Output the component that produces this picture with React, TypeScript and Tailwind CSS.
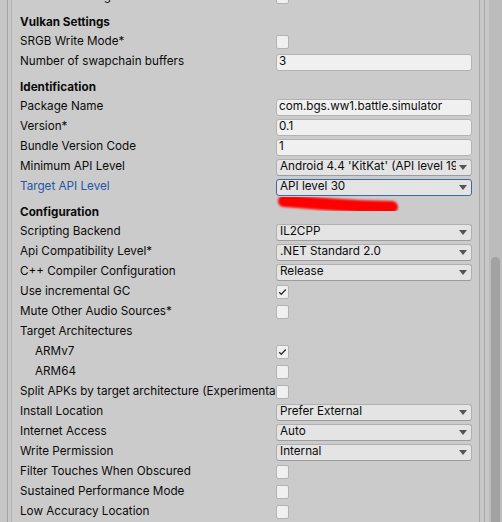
import React from "react";

type RowProps = {
  label: string;
  indent?: boolean;
  blue?: boolean;
  children?: React.ReactNode;
};

function Row({ label, indent, blue, children }: RowProps) {
  return (
    <div className="flex h-5 items-center">
      <div
        className={`w-[264px] shrink-0 overflow-hidden whitespace-nowrap pr-[3px] ${indent ? "pl-[23px]" : "pl-2"} ${blue ? "text-[#2656a6]" : "text-[#0b0b0b]"}`}
      >
        {label}
      </div>
      <div className="flex w-[196px] shrink-0 items-center">{children}</div>
    </div>
  );
}

function Header({ title }: { title: string }) {
  return (
    <div className="mt-[7px] flex h-[18px] items-center pl-2 font-bold text-[#0b0b0b]">{title}</div>
  );
}

function TextField({ value }: { value: string }) {
  return (
    <div className="flex h-[17px] w-full items-center overflow-hidden whitespace-nowrap rounded-[3px] border border-[#b3b3b3] bg-[#f0f0f0] pl-[2px] text-[#0b0b0b]">
      {value}
    </div>
  );
}

function Dropdown({ value, focused }: { value: string; focused?: boolean }) {
  return (
    <div
      className={`flex h-[17px] w-full items-center rounded-[3px] border bg-[#e4e4e4] pl-[3px] pr-[4px] text-[#0b0b0b] ${focused ? "border-[#3c6aa8]" : "border-[#b0b0b0] border-b-[#9c9c9c]"}`}
    >
      <div className="flex-1 overflow-hidden whitespace-nowrap">{value}</div>
      <svg width="8" height="5" viewBox="0 0 8 5" className="ml-[3px] shrink-0">
        <polygon points="0,0 8,0 4,5" fill="#555555" />
      </svg>
    </div>
  );
}

function Checkbox({ checked }: { checked?: boolean }) {
  return (
    <div className="flex h-[14px] w-[13px] items-center justify-center rounded-[2px] border border-[#b3b3b3] bg-[#f0f0f0]">
      {checked && (
        <svg width="9" height="8" viewBox="0 0 9 8">
          <polyline points="1.2,4.2 3.3,6.3 7.8,1.5" fill="none" stroke="#303030" strokeWidth="1.3" />
        </svg>
      )}
    </div>
  );
}

export default function App() {
  return (
    <div
      className="flex h-[522px] w-[502px] overflow-hidden bg-[#cbcbcb] text-[11.7px]"
      style={{ fontFamily: "Inter, 'Noto Sans', sans-serif" }}
    >
      {/* left strip */}
      <div className="flex w-[12px] shrink-0">
        <div className="w-[7px] bg-[#c6c6c6]" />
        <div className="w-px bg-[#a6a6a6]" />
        <div className="w-[3px] bg-[#c8c8c8]" />
        <div className="w-px bg-[#b4b4b4]" />
      </div>

      {/* content */}
      <div className="relative w-[467px] shrink-0">
        <div className="-mt-[13px]">
          <Row label="Virtual Texturing*">
            <Checkbox />
          </Row>
          <Header title="Vulkan Settings" />
          <Row label="SRGB Write Mode*">
            <Checkbox />
          </Row>
          <Row label="Number of swapchain buffers">
            <TextField value="3" />
          </Row>
          <Header title="Identification" />
          <Row label="Package Name">
            <TextField value="com.bgs.ww1.battle.simulator" />
          </Row>
          <Row label="Version*">
            <TextField value="0.1" />
          </Row>
          <Row label="Bundle Version Code">
            <TextField value="1" />
          </Row>
          <Row label="Minimum API Level">
            <Dropdown value="Android 4.4 'KitKat' (API level 19)" />
          </Row>
          <Row label="Target API Level" blue>
            <Dropdown value="API level 30" focused />
          </Row>
          <Header title="Configuration" />
          <Row label="Scripting Backend">
            <Dropdown value="IL2CPP" />
          </Row>
          <Row label="Api Compatibility Level*">
            <Dropdown value=".NET Standard 2.0" />
          </Row>
          <Row label="C++ Compiler Configuration">
            <Dropdown value="Release" />
          </Row>
          <Row label="Use incremental GC">
            <Checkbox checked />
          </Row>
          <Row label="Mute Other Audio Sources*">
            <Checkbox />
          </Row>
          <Row label="Target Architectures" />
          <Row label="ARMv7" indent>
            <Checkbox checked />
          </Row>
          <Row label="ARM64" indent>
            <Checkbox />
          </Row>
          <Row label="Split APKs by target architecture (Experimental)">
            <Checkbox />
          </Row>
          <Row label="Install Location">
            <Dropdown value="Prefer External" />
          </Row>
          <Row label="Internet Access">
            <Dropdown value="Auto" />
          </Row>
          <Row label="Write Permission">
            <Dropdown value="Internal" />
          </Row>
          <Row label="Filter Touches When Obscured">
            <Checkbox />
          </Row>
          <Row label="Sustained Performance Mode">
            <Checkbox />
          </Row>
          <Row label="Low Accuracy Location">
            <Checkbox />
          </Row>
        </div>

        {/* red annotation stroke */}
        <svg
          className="pointer-events-none absolute left-[258px] top-[189px]"
          width="140"
          height="30"
          viewBox="0 0 140 30"
        >
          <defs>
            <filter id="soft" x="-10%" y="-60%" width="120%" height="220%">
              <feGaussianBlur stdDeviation="1.2" />
            </filter>
          </defs>
          <path
            d="M14 12 C 45 14.5, 85 18, 122 18"
            fill="none"
            stroke="#ff0606"
            strokeWidth="12"
            strokeLinecap="round"
            filter="url(#soft)"
          />
        </svg>
      </div>

      {/* right separators */}
      <div className="w-px shrink-0 bg-[#a9a9a9]" />
      <div className="w-[4px] shrink-0 bg-[#c8c8c8]" />
      <div className="w-px shrink-0 bg-[#a9a9a9]" />
      <div className="w-[4px] shrink-0 bg-[#c8c8c8]" />

      {/* scrollbar */}
      <div className="flex w-[13px] shrink-0 flex-col bg-[#bcbcbc]">
        <div className="h-[257px]" />
        <div className="mx-[2px] flex-1 rounded-t-[5px] bg-[#a2a2a2]" />
      </div>
    </div>
  );
}
